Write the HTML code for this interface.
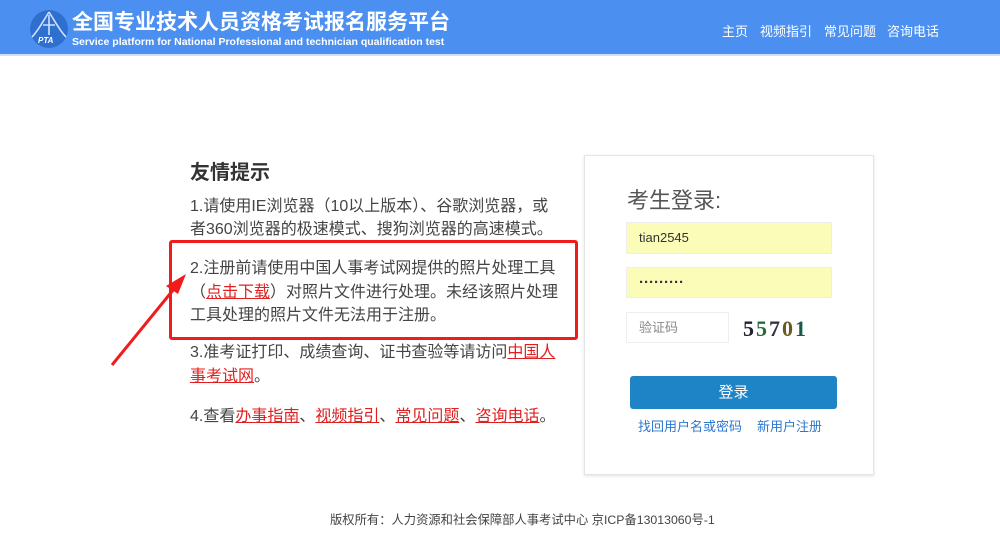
<!DOCTYPE html>
<html><head><meta charset="utf-8"><style>
*{margin:0;padding:0;box-sizing:border-box}
body{width:1000px;height:545px;background:#fff;position:relative;overflow:hidden;font-family:"Liberation Sans","Noto Sans CJK SC",sans-serif;color:#333}
.hdr{position:absolute;left:0;top:0;width:1000px;height:56px;background:#4b90f0;border-bottom:2px solid #cfe0fa}
.t1{position:absolute;left:72px;top:6px;font-size:21px;font-weight:bold;color:#fff;letter-spacing:0;white-space:nowrap}
.t2{position:absolute;left:72px;top:36px;font-size:10.5px;font-weight:bold;color:#fff;white-space:nowrap}
.nav{position:absolute;top:21px;font-size:13px;color:#fff}
.l{position:absolute;left:190px;font-size:16px;color:#444;white-space:nowrap;line-height:22px}
.r{color:#e02020;text-decoration:underline}
.box{position:absolute;left:584px;top:155px;width:290px;height:320px;border:1px solid #e4e4e4;box-shadow:0 1px 3px rgba(0,0,0,.12);background:#fff}
.in{position:absolute;background:#fafcb8;border:1px solid #eee;font-size:13px;padding-left:12px;line-height:30px;color:#333}
</style></head><body>
<div class="hdr">
<svg style="position:absolute;left:28px;top:9px" width="42" height="40" viewBox="0 0 42 40"><circle cx="21" cy="20" r="19" fill="#2f6fcf"/><path d="M21 3 C14 14 10 22 4 28 M21 3 C28 14 32 22 38 28 M21 6 L21 26 M15 16 L27 16" stroke="#cfe2ff" stroke-width="1.6" fill="none"/><text x="10" y="34" font-size="8" font-style="italic" font-weight="bold" fill="#fff" font-family="Liberation Sans">PTA</text></svg>
<div class="t1">全国专业技术人员资格考试报名服务平台</div>
<div class="t2">Service platform for National Professional and technician qualification test</div>
<div class="nav" style="left:722px">主页</div>
<div class="nav" style="left:760px">视频指引</div>
<div class="nav" style="left:824px">常见问题</div>
<div class="nav" style="left:887px">咨询电话</div>
</div>
<div style="position:absolute;left:190px;top:156px;font-size:20px;font-weight:bold;color:#333">友情提示</div>
<div class="l" style="top:196px">1.请使用IE浏览器（10以上版本）、谷歌浏览器，或</div>
<div class="l" style="top:219px">者360浏览器的极速模式、搜狗浏览器的高速模式。</div>
<div class="l" style="top:258px">2.注册前请使用中国人事考试网提供的照片处理工具</div>
<div class="l" style="top:282px">（<span class="r">点击下载</span>）对照片文件进行处理。未经该照片处理</div>
<div class="l" style="top:305px">工具处理的照片文件无法用于注册。</div>
<div class="l" style="top:342px">3.准考证打印、成绩查询、证书查验等请访问<span class="r">中国人</span></div>
<div class="l" style="top:366px"><span class="r">事考试网</span>。</div>
<div class="l" style="top:406px">4.查看<span class="r">办事指南</span>、<span class="r">视频指引</span>、<span class="r">常见问题</span>、<span class="r">咨询电话</span>。</div>
<div style="position:absolute;left:169px;top:240px;width:409px;height:100px;border:3px solid #f01c1c;border-radius:3px"></div>
<svg style="position:absolute;left:0;top:0" width="1000" height="545"><path d="M112 365 L178 284" stroke="#f01c1c" stroke-width="3"/><path d="M186 274 L166 286 L178 294 Z" fill="#f01c1c"/><ellipse cx="796" cy="424" rx="56" ry="18" fill="none" stroke="#e82020" stroke-width="2"/><path d="M744 397 l4 7 l6 -6" stroke="#e82020" stroke-width="2" fill="none"/></svg>
<div class="box">
<div style="position:absolute;left:42px;top:27px;font-size:22px;color:#555">考生登录:</div>
<div class="in" style="left:41px;top:66px;width:206px;height:32px">tian2545</div>
<div class="in" style="left:41px;top:111px;width:206px;height:31px;font-weight:bold;font-size:15px;letter-spacing:0">·········</div>
<div class="in" style="left:41px;top:156px;width:103px;height:31px;background:#fff;color:#888">验证码</div>
<div style="position:absolute;left:158px;top:160px;font-size:22px;font-weight:bold;letter-spacing:2px;font-family:'Liberation Serif',serif"><span style="color:#223">5</span><span style="color:#2a6a3a">5</span><span style="color:#334">7</span><span style="color:#6a5a20">0</span><span style="color:#1a5a4a">1</span></div>
<div style="position:absolute;left:45px;top:220px;width:207px;height:33px;background:#1f84c6;border-radius:3px;color:#fff;font-size:15px;text-align:center;line-height:33px">登录</div>
<div style="position:absolute;left:53px;top:260px;font-size:13px;color:#2a78d0">找回用户名或密码</div>
<div style="position:absolute;left:172px;top:260px;font-size:13px;color:#2a78d0">新用户注册</div>
</div>
<div style="position:absolute;left:330px;top:510px;font-size:12.3px;color:#444">版权所有：人力资源和社会保障部人事考试中心 京ICP备13013060号-1</div>
</body></html>
